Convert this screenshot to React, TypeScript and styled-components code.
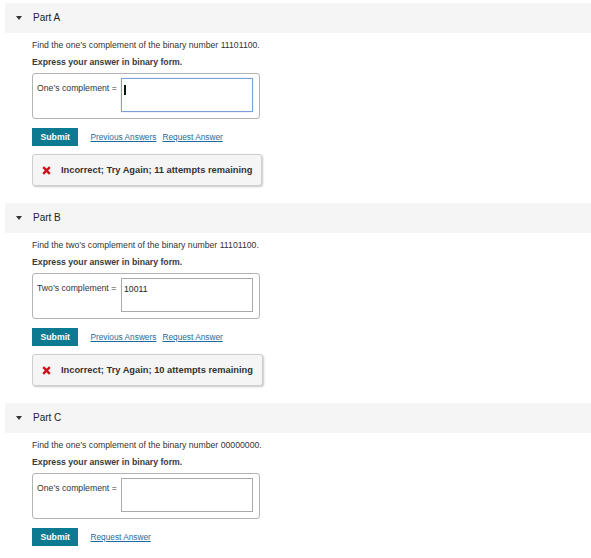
import React from "react";
import styled, { createGlobalStyle } from "styled-components";

const Global = createGlobalStyle`
  html, body { margin: 0; padding: 0; background: #fff; }
  body { font-family: "Liberation Sans", Arial, sans-serif; color: #333; }
`;

const Page = styled.div`
  padding: 3px 0 0 5px;
  width: 586px;
`;

const Part = styled.section`
  margin-bottom: 17px;
`;

const Header = styled.div`
  height: 30px;
  background: #f5f5f5;
  display: flex;
  align-items: center;
  padding-left: 11px;
`;

const Caret = styled.span`
  width: 0;
  height: 0;
  border-left: 3px solid transparent;
  border-right: 3px solid transparent;
  border-top: 4px solid #333;
  margin-right: 11px;
  margin-top: -1px;
`;

const Title = styled.span`
  font-size: 10px;
  color: #222;
  line-height: 12px;
`;

const Body = styled.div`
  padding: 6px 0 0 27px;
`;

const Prompt = styled.div`
  font-size: 8.7px;
  line-height: 12px;
  color: #333;
`;

const Instruction = styled.div`
  margin-top: 5px;
  font-size: 8.7px;
  line-height: 12px;
  font-weight: bold;
  color: #3a3a3a;
`;

const AnswerBox = styled.div`
  margin-top: 5px;
  box-sizing: border-box;
  width: 228px;
  border: 1px solid #b3b3b3;
  border-radius: 3px;
  padding: 4px 6px 6px 4px;
  display: flex;
  align-items: flex-start;
`;

const Label = styled.span`
  font-size: 8.7px;
  line-height: 12px;
  padding-top: 4px;
  color: #333;
  white-space: pre;
`;

const Field = styled.div<{ $focused?: boolean }>`
  margin-left: auto;
  box-sizing: border-box;
  width: 132px;
  height: 34px;
  border: 1px solid ${(p) => (p.$focused ? "#7b9fd9" : "#a9a9a9")};
  box-shadow: ${(p) => (p.$focused ? "0 0 1px rgba(90,130,210,0.5)" : "none")};
  padding: 4px 2px 0 2px;
  font-size: 8.7px;
  line-height: 12px;
  color: #222;
  display: flex;
  align-items: flex-start;
`;

const TextCaret = styled.span`
  display: inline-block;
  width: 1.5px;
  height: 10px;
  margin-top: 2px;
  background: #111;
`;

const Actions = styled.div`
  margin-top: 9px;
  display: flex;
  align-items: center;
`;

const SubmitButton = styled.button`
  height: 18px;
  padding: 0 8.5px;
  border: none;
  border-radius: 0;
  background: #0d7a91;
  color: #fff;
  font-family: "Liberation Sans", Arial, sans-serif;
  font-size: 8.7px;
  font-weight: bold;
  line-height: 18px;
  cursor: pointer;
`;

const Links = styled.div`
  margin-left: 12px;
  display: flex;
  gap: 6px;
`;

const TextLink = styled.a`
  font-size: 8.3px;
  color: #1f6a9c;
  text-decoration: underline;
  line-height: 12px;
  cursor: pointer;
`;

const Feedback = styled.div`
  margin-top: 8px;
  box-sizing: border-box;
  width: fit-content;
  height: 32px;
  display: flex;
  align-items: center;
  gap: 10px;
  padding: 0 9px;
  background: #f5f5f5;
  border: 1px solid #cfcfcf;
  border-radius: 3px;
  box-shadow: 1px 1px 2px rgba(0, 0, 0, 0.22);
`;

const FeedbackText = styled.span`
  font-size: 9.3px;
  font-weight: bold;
  color: #333;
  line-height: 12px;
`;

const CrossIcon = () => (
  <svg width="9" height="9" viewBox="0 0 9 9" aria-hidden>
    <path d="M1.2 1.2 L7.8 7.8 M7.8 1.2 L1.2 7.8" stroke="#d0101e" strokeWidth="2.4" strokeLinecap="butt" />
  </svg>
);

type PartData = {
  name: string;
  prompt: string;
  label: string;
  value?: string;
  focused?: boolean;
  previous?: boolean;
  attempts?: number;
};

const parts: PartData[] = [
  {
    name: "Part A",
    prompt: "Find the one\u2019s complement of the binary number 11101100.",
    label: "One\u2019s complement = ",
    focused: true,
    previous: true,
    attempts: 11,
  },
  {
    name: "Part B",
    prompt: "Find the two\u2019s complement of the binary number 11101100.",
    label: "Two\u2019s complement = ",
    value: "10011",
    previous: true,
    attempts: 10,
  },
  {
    name: "Part C",
    prompt: "Find the one\u2019s complement of the binary number 00000000.",
    label: "One\u2019s complement = ",
  },
];

export default function App() {
  return (
    <>
      <Global />
      <Page>
        {parts.map((p) => (
          <Part key={p.name}>
            <Header>
              <Caret />
              <Title>{p.name}</Title>
            </Header>
            <Body>
              <Prompt>{p.prompt}</Prompt>
              <Instruction>Express your answer in binary form.</Instruction>
              <AnswerBox>
                <Label>{p.label}</Label>
                <Field $focused={p.focused}>
                  {p.focused ? <TextCaret /> : p.value}
                </Field>
              </AnswerBox>
              <Actions>
                <SubmitButton>Submit</SubmitButton>
                <Links>
                  {p.previous && <TextLink>Previous Answers</TextLink>}
                  <TextLink>Request Answer</TextLink>
                </Links>
              </Actions>
              {p.attempts !== undefined && (
                <Feedback>
                  <CrossIcon />
                  <FeedbackText>
                    Incorrect; Try Again; {p.attempts} attempts remaining
                  </FeedbackText>
                </Feedback>
              )}
            </Body>
          </Part>
        ))}
      </Page>
    </>
  );
}
